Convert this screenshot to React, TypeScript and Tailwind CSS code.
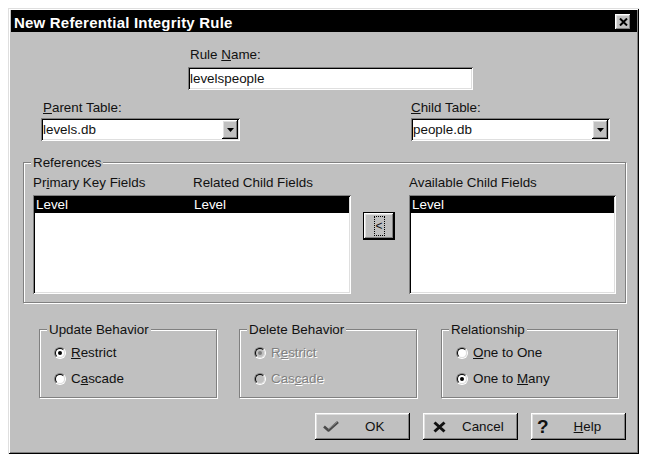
import type { ReactNode } from "react";

// Win95 style bevels
const raised =
  "shadow-[inset_-1px_-1px_0_#000,inset_1px_1px_0_#fff,inset_-2px_-2px_0_#808080,inset_2px_2px_0_#dfdfdf]";
const sunken =
  "shadow-[inset_1px_1px_0_#808080,inset_-1px_-1px_0_#fff,inset_2px_2px_0_#000,inset_-2px_-2px_0_#dfdfdf]";
const etched = "border border-[#808080] shadow-[inset_1px_1px_0_#fff,1px_1px_0_#fff]";
const disabledText = "text-[#808080] [text-shadow:1px_1px_0_#fff]";

const GroupBox = ({ title, className, children }: { title: string; className?: string; children: ReactNode }) => (
  <fieldset className={`${etched} ${className ?? ""}`}>
    <legend className="ml-[7px] bg-[#c0c0c0] px-[2px] leading-[15px]">{title}</legend>
    {children}
  </fieldset>
);

const Radio = ({ checked, disabled }: { checked?: boolean; disabled?: boolean }) => (
  <span className="flex h-[12px] w-[12px] shrink-0 rounded-full border border-t-[#808080] border-r-white border-b-white border-l-[#808080]">
    <span
      className={`flex h-full w-full items-center justify-center rounded-full border border-t-black border-r-[#dfdfdf] border-b-[#dfdfdf] border-l-black ${
        disabled ? "bg-[#c0c0c0]" : "bg-white"
      }`}
    >
      {checked && <span className={`h-[4px] w-[4px] rounded-full ${disabled ? "bg-[#808080]" : "bg-black"}`} />}
    </span>
  </span>
);

const RadioRow = ({
  checked,
  disabled,
  className,
  children,
}: {
  checked?: boolean;
  disabled?: boolean;
  className?: string;
  children: ReactNode;
}) => (
  <div className={`flex h-[15px] items-center gap-[5px] pl-[14px] ${className ?? ""}`}>
    <Radio checked={checked} disabled={disabled} />
    <span className={disabled ? disabledText : ""}>{children}</span>
  </div>
);

const DownArrow = () => (
  <svg width="7" height="4" viewBox="0 0 7 4">
    <path d="M0 0h7L3.5 4z" fill="#000" />
  </svg>
);

const Combo = ({ value }: { value: string }) => (
  <div className={`flex h-[23px] w-[199px] items-center bg-white p-[2px] ${sunken}`}>
    <span className="flex-1 leading-[15px]">{value}</span>
    <span className={`flex h-full w-[16px] items-center justify-center bg-[#c0c0c0] ${raised}`}>
      <DownArrow />
    </span>
  </div>
);

const PushButton = ({ children }: { children: ReactNode }) => (
  <div className={`flex h-[27px] w-[95px] items-center bg-[#c0c0c0] ${raised}`}>{children}</div>
);

export default function App() {
  return (
    <div className="h-[465px] w-[648px] bg-white pt-[8px] pl-[8px] font-['Liberation_Sans',Arial,sans-serif] text-[13.4px] leading-[15px] text-[#111]">
      <div
        className={`flex h-[446px] w-[631px] flex-col bg-[#c0c0c0] pt-[2px] pr-[2px] pb-[2px] pl-[3px] shadow-[inset_1px_1px_0_#dfdfdf,inset_-1px_-1px_0_#000,inset_2px_2px_0_#fff,inset_-2px_-2px_0_#808080]`}
      >
        {/* title bar */}
        <div className="flex h-[22px] items-start bg-black">
          <div className="flex-1 pt-[4px] pl-[3px] text-[15px] leading-[18px] font-bold tracking-[0.2px] text-white">
            New Referential Integrity Rule
          </div>
          <div className={`mt-[4px] mr-[6px] flex h-[16px] w-[16px] items-center justify-center bg-[#c0c0c0] ${raised}`}>
            <svg width="9" height="8" viewBox="0 0 9 8">
              <path d="M1 0.5l7 7M8 0.5l-7 7" stroke="#000" strokeWidth="2" />
            </svg>
          </div>
        </div>

        {/* rule name */}
        <div className="mt-[15px] ml-[177px]">
          <div className="h-[15px] pl-[2px]">
            Rule <u>N</u>ame:
          </div>
          <div className={`mt-[5px] flex h-[23px] w-[285px] items-center bg-white p-[2px] ${sunken}`}>levelspeople</div>
        </div>

        {/* tables */}
        <div className="mt-[10px] flex">
          <div className="ml-[30px]">
            <div className="h-[15px] pl-[2px]">
              <u>P</u>arent Table:
            </div>
            <div className="mt-[3px]">
              <Combo value="levels.db" />
            </div>
          </div>
          <div className="ml-[171px]">
            <div className="h-[15px]">
              <u>C</u>hild Table:
            </div>
            <div className="mt-[3px]">
              <Combo value="people.db" />
            </div>
          </div>
        </div>

        {/* references */}
        <GroupBox title="References" className="mt-[14px] ml-[12px] w-[603px]">
          <div className="flex px-[9px] pb-[8px]">
            <div className="w-[318px]">
              <div className="mt-[5px] flex h-[15px]">
                <span className="w-[160px]">
                  Pr<u>i</u>mary Key Fields
                </span>
                <span>Related Child Fields</span>
              </div>
              <div className={`mt-[5px] h-[99px] bg-white p-[2px] ${sunken}`}>
                <div className="flex h-[16px] items-center bg-black pl-[1px] leading-[16px] text-white">
                  <span className="w-[158px]">Level</span>
                  <span>Level</span>
                </div>
              </div>
            </div>
            <div
              className={`mt-[42px] ml-[12px] flex h-[28px] w-[32px] items-center justify-center border border-black bg-[#c0c0c0] ${raised}`}
            >
              <span className="flex h-[20px] w-[11px] items-center justify-center border border-dotted border-black text-[12px] leading-[12px]">
                &lt;
              </span>
            </div>
            <div className="ml-[14px] w-[207px]">
              <div className="mt-[5px] h-[15px]">Available Child Fields</div>
              <div className={`mt-[5px] h-[99px] bg-white p-[2px] ${sunken}`}>
                <div className="flex h-[16px] items-center bg-black pl-[1px] leading-[16px] text-white">Level</div>
              </div>
            </div>
          </div>
        </GroupBox>

        {/* behaviors */}
        <div className="mt-[19px] ml-[28px] flex">
          <GroupBox title="Update Behavior" className="w-[178px] pb-[11px]">
            <RadioRow checked className="mt-[8px]">
              <u>R</u>estrict
            </RadioRow>
            <RadioRow className="mt-[11px]">
              C<u>a</u>scade
            </RadioRow>
          </GroupBox>
          <GroupBox title="Delete Behavior" className="ml-[22px] w-[178px] pb-[11px]">
            <RadioRow checked disabled className="mt-[8px]">
              R<u>e</u>strict
            </RadioRow>
            <RadioRow disabled className="mt-[11px]">
              Cas<u>c</u>ade
            </RadioRow>
          </GroupBox>
          <GroupBox title="Relationship" className="ml-[24px] w-[177px] pb-[11px]">
            <RadioRow className="mt-[8px]">
              <u>O</u>ne to One
            </RadioRow>
            <RadioRow checked className="mt-[11px]">
              One to <u>M</u>any
            </RadioRow>
          </GroupBox>
        </div>

        {/* buttons */}
        <div className="mt-[15px] ml-[304px] flex gap-[13px]">
          <PushButton>
            <svg className="ml-[8px]" width="16" height="11" viewBox="0 0 16 11">
              <path d="M1 5.5l4.5 4L15 1" fill="none" stroke="#4a4a4a" strokeWidth="2.6" strokeLinejoin="round" />
              <path d="M5.5 8.2L14.5 0.6" fill="none" stroke="#9a9a9a" strokeWidth="0.8" />
            </svg>
            <span className="ml-[26px]">OK</span>
          </PushButton>
          <PushButton>
            <svg className="ml-[10px]" width="13" height="12" viewBox="0 0 13 12">
              <path d="M1.5 1.5l10 9M11.5 1.5l-10 9" stroke="#111" strokeWidth="3" />
            </svg>
            <span className="ml-[16px]">Cancel</span>
          </PushButton>
          <PushButton>
            <span className="ml-[6px] text-[19px] leading-[19px] font-bold">?</span>
            <span className="ml-[25px]">
              <u>H</u>elp
            </span>
          </PushButton>
        </div>
      </div>
    </div>
  );
}
